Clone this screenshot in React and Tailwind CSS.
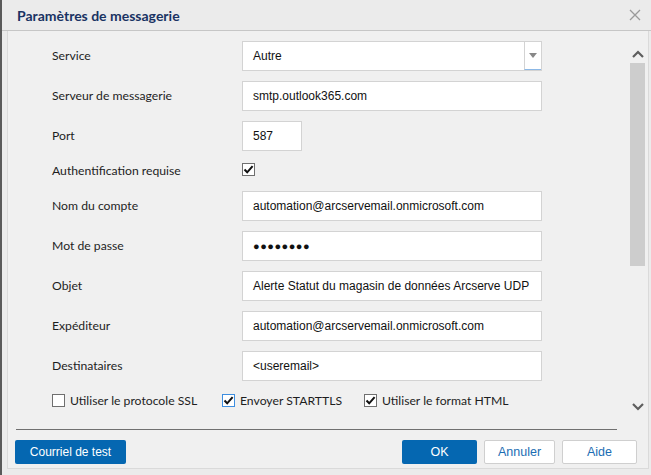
import { useState } from 'react'

const LABEL_FONT = { fontFamily: 'Lato, "Noto Sans", sans-serif' }
const INPUT_FONT = { fontFamily: '"Liberation Sans", Arial, sans-serif' }

function Check({ checked, focus }) {
  return (
    <span className={`w-[13px] h-[13px] bg-white border flex items-center justify-center shrink-0 ${focus ? 'border-[#3d8ee0]' : 'border-[#6f6f6f]'}`}>
      {checked && (
        <svg width="11" height="11" viewBox="0 0 11 11">
          <path d="M1.5 5.5 L4.2 8.3 L9.6 2.2" fill="none" stroke="#111" strokeWidth="2" />
        </svg>
      )}
    </span>
  )
}

function Field({ label, children }) {
  return (
    <div className="flex items-center h-[30px] mb-[10px]">
      <div className="w-[190px] text-[12.2px] text-[#1e1e1e]" style={LABEL_FONT}>{label}</div>
      {children}
    </div>
  )
}

function TextBox({ value, w = 'w-[300px]', dots }) {
  return (
    <div className={`${w} h-[30px] bg-white border border-[#d3d3d3] flex items-center px-[10px] text-[12px] text-[#111]`} style={INPUT_FONT}>
      {dots ? <span className="tracking-[0.5px] text-[11px]">●●●●●●●●</span> : value}
    </div>
  )
}

export default function App() {
  const [tab] = useState(0)

  return (
    <div className="w-[651px] h-[475px] bg-[#ebebeb] border-l-2 border-[#5a5a5a] flex flex-col overflow-hidden">
      {/* title bar */}
      <div className="h-[31px] shrink-0 flex items-center justify-between pl-[15px] pr-[10px] border-b border-[#c6c6c6]">
        <span className="text-[14px] font-bold text-[#1a3363]" style={LABEL_FONT}>Paramètres de messagerie</span>
        <svg width="12" height="12" viewBox="0 0 12 12">
          <path d="M1 1 L11 11 M11 1 L1 11" stroke="#9a9a9a" strokeWidth="1.3" fill="none" />
        </svg>
      </div>

      {/* body */}
      <div className="flex-1 flex pl-[5px] pr-[2px] pb-[6px]">
        <div className="flex-1 flex flex-col bg-[#f0f0f0] border-l border-b border-r border-[#dadada]">
          <div className="flex h-[386px]">
            {/* form */}
            <div className="flex-1 pt-[10px] pl-[44px]" data-tab={tab}>
              <Field label="Service">
                <div className="w-[300px] h-[30px] bg-white border border-[#d3d3d3] flex items-center" style={INPUT_FONT}>
                  <span className="flex-1 px-[10px] text-[12px] text-[#111]">Autre</span>
                  <span className="w-[17px] h-full border-l border-[#d3d3d3] border-b border-b-[#8cb8e6] flex items-center justify-center">
                    <svg width="8" height="5" viewBox="0 0 8 5"><path d="M0 0 H8 L4 5 Z" fill="#888" /></svg>
                  </span>
                </div>
              </Field>
              <Field label="Serveur de messagerie">
                <TextBox value="smtp.outlook365.com" />
              </Field>
              <Field label="Port">
                <TextBox value="587" w="w-[60px]" />
              </Field>
              <div className="flex items-center h-[20px] mb-[10px]">
                <div className="w-[190px] text-[12.2px] text-[#1e1e1e]" style={LABEL_FONT}>Authentification requise</div>
                <div className="-mt-[3px]"><Check checked /></div>
              </div>
              <Field label="Nom du compte">
                <TextBox value="automation@arcservemail.onmicrosoft.com" />
              </Field>
              <Field label="Mot de passe">
                <TextBox dots />
              </Field>
              <Field label="Objet">
                <TextBox value="Alerte Statut du magasin de données Arcserve UDP" />
              </Field>
              <Field label="Expéditeur">
                <TextBox value="automation@arcservemail.onmicrosoft.com" />
              </Field>
              <Field label="Destinataires">
                <TextBox value="<useremail>" />
              </Field>
              <div className="flex items-center h-[20px] text-[12.2px] text-[#1e1e1e]" style={LABEL_FONT}>
                <label className="flex items-center gap-[5px] w-[170px]">
                  <Check />
                  <span>Utiliser le protocole SSL</span>
                </label>
                <label className="flex items-center gap-[5px] w-[142px]">
                  <Check checked focus />
                  <span>Envoyer STARTTLS</span>
                </label>
                <label className="flex items-center gap-[5px]">
                  <Check checked />
                  <span>Utiliser le format HTML</span>
                </label>
              </div>
            </div>

            {/* scrollbar */}
            <div className="w-[17px] mr-[2px] flex flex-col items-center pt-[19px]">
              <svg width="12" height="8" viewBox="0 0 12 8"><path d="M1 7 L6 2 L11 7" fill="none" stroke="#5e5e5e" strokeWidth="2.2" /></svg>
              <div className="w-[15px] h-[203px] bg-[#cdcdcd] mt-[5px]" />
              <div className="flex-1" />
              <svg width="12" height="8" viewBox="0 0 12 8" className="mb-[6px]"><path d="M1 1 L6 6 L11 1" fill="none" stroke="#5e5e5e" strokeWidth="2.2" /></svg>
            </div>
          </div>

          {/* footer */}
          <div className="ml-[8px] mr-[31px] border-t border-[#707070] mt-[12px]" />
          <div className="flex items-center justify-between pl-[7px] pr-[11px] pt-[10px]" style={INPUT_FONT}>
            <button className="w-[111px] h-[24px] bg-[#0567b1] rounded-[2px] text-white text-[12px]">Courriel de test</button>
            <div className="flex gap-[7px]">
              <button className="w-[75px] h-[24px] bg-[#0567b1] rounded-[2px] text-white text-[12.5px]">OK</button>
              <button className="w-[71px] h-[24px] bg-white border border-[#cfcfcf] rounded-[2px] text-[#1b6db3] text-[12.5px]">Annuler</button>
              <button className="w-[75px] h-[24px] bg-white border border-[#cfcfcf] rounded-[2px] text-[#1b6db3] text-[12.5px]">Aide</button>
            </div>
          </div>
        </div>
      </div>
    </div>
  )
}
